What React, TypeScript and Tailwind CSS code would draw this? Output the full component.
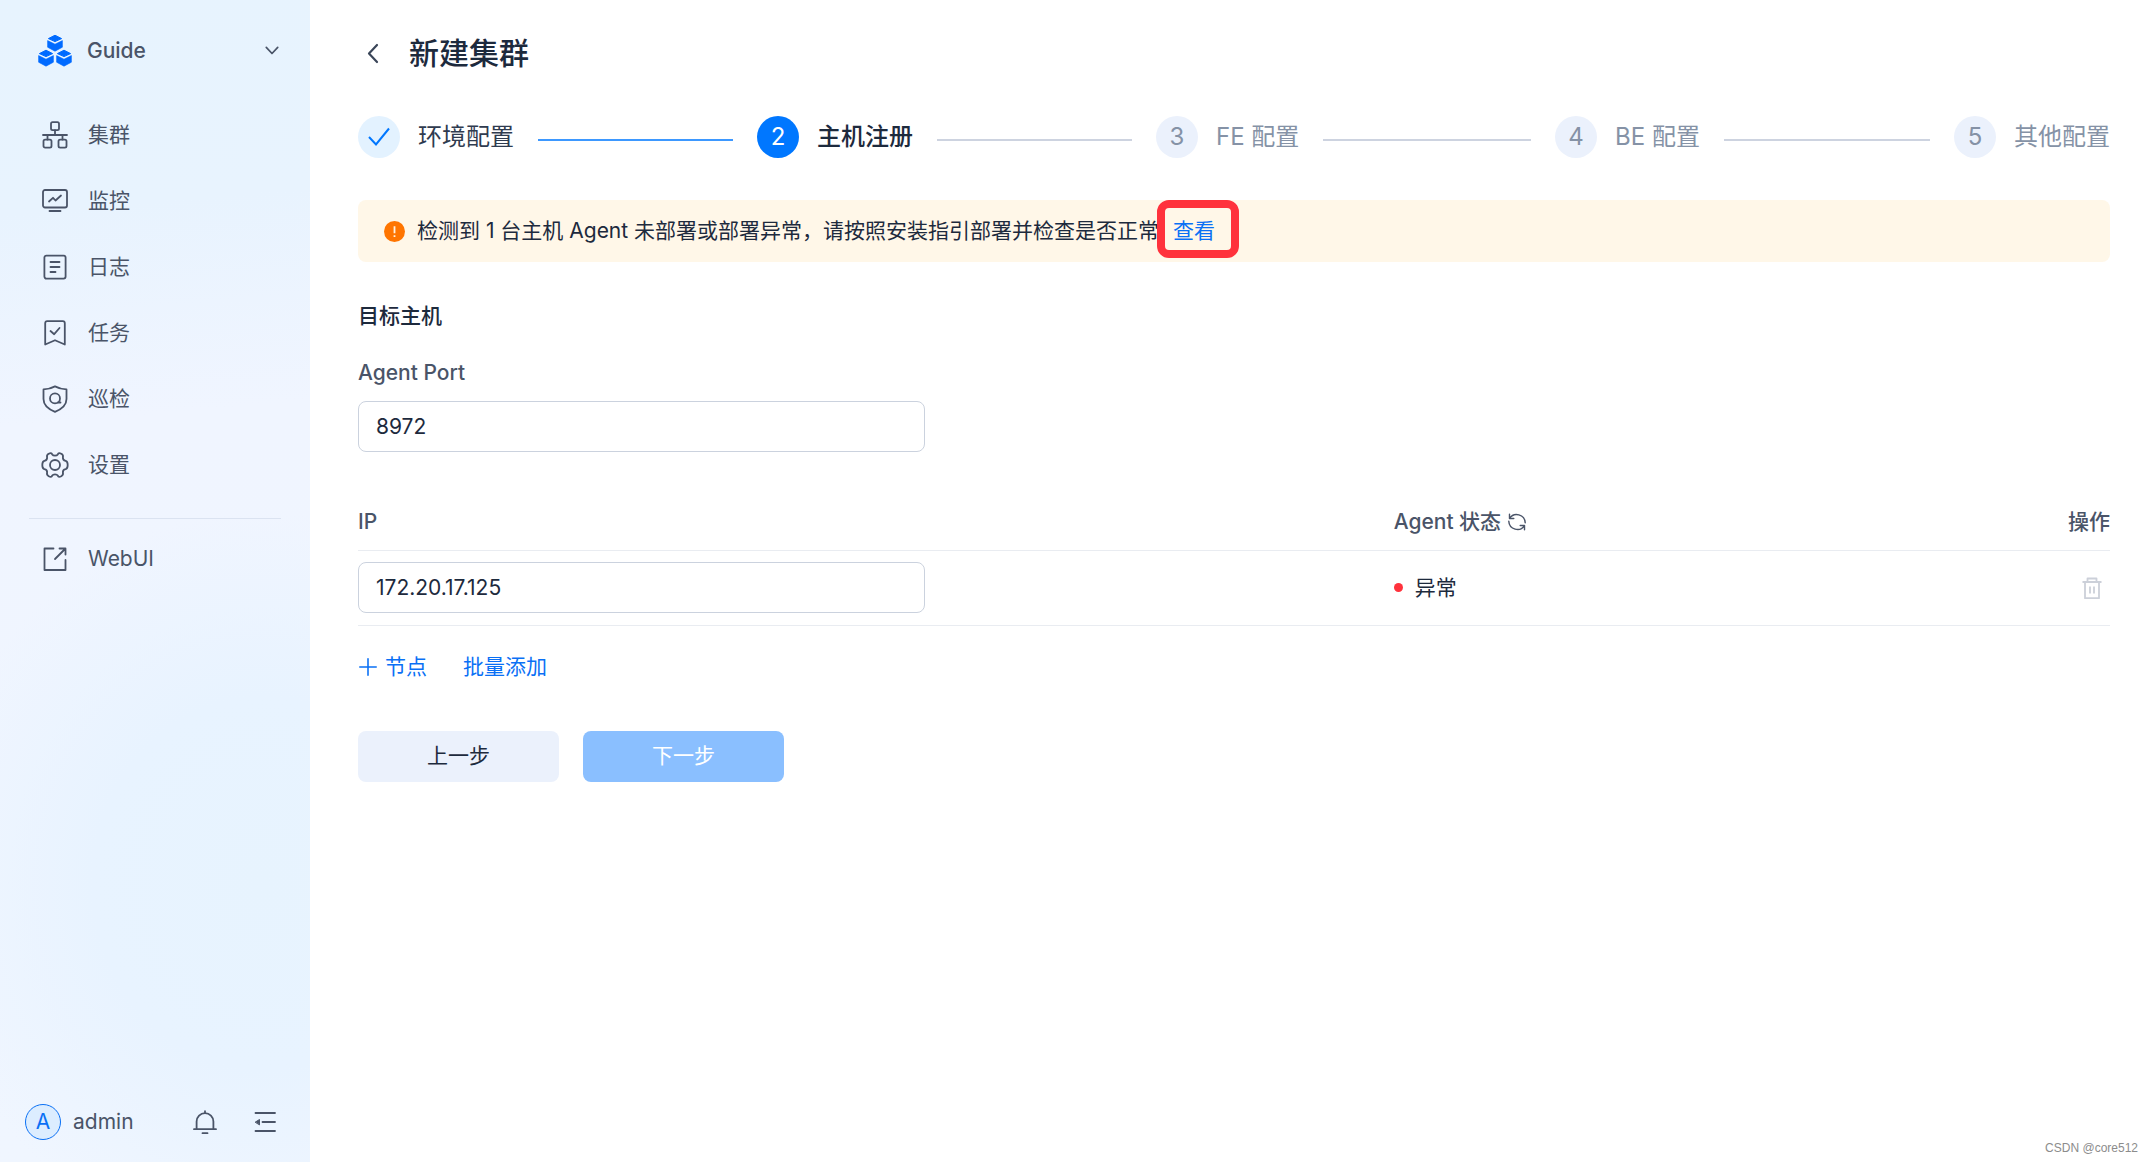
import { ReactNode, useState } from "react";

interface IconProps {
    className?: string;
}

interface NavItem {
    label: string;
    icon: ReactNode;
}

interface Host {
    ip: string;
    status: string;
}

const StrokeIcon = ({ children, className = "size-7" }: IconProps & { children: ReactNode }) => (
    <svg
        className={className}
        viewBox="0 0 28 28"
        fill="none"
        stroke="currentColor"
        strokeWidth="1.8"
        strokeLinecap="round"
        strokeLinejoin="round"
        aria-hidden="true"
    >
        {children}
    </svg>
);

const Logo = () => (
    <svg className="h-8 w-[34px]" viewBox="0 0 34 32" fill="#006aff" aria-hidden="true">
        {[
            [9, 0],
            [0, 15],
            [18, 15],
        ].map(([x, y]) => (
            <g key={`${x}-${y}`} transform={`translate(${x} ${y})`}>
                <path d="M8 0.2 14.6 3.6 8 6.6 1.4 3.6Z" stroke="#006aff" strokeLinejoin="round" />
                <path d="M0.6 5.6 8 9.2 15.4 5.6V12.2L8 16.2 0.6 12.2Z" stroke="#006aff" strokeWidth="0.6" strokeLinejoin="round" />
            </g>
        ))}
    </svg>
);

const navItems: NavItem[] = [
    {
        label: "集群",
        icon: (
            <StrokeIcon>
                <rect x="10" y="1.2" width="8" height="8" rx="1.6" />
                <path d="M14 9.2V14M2 14H26M6.5 14V18.5M21.5 14V18.5" />
                <rect x="2.5" y="18.6" width="8" height="8" rx="1.6" />
                <rect x="17.5" y="18.6" width="8" height="8" rx="1.6" />
            </StrokeIcon>
        ),
    },
    {
        label: "监控",
        icon: (
            <StrokeIcon>
                <rect x="2" y="3" width="24" height="17.5" rx="2" />
                <path d="M8.5 24H19.5M8 14.5 12 10.8 14.5 13.5 20 8.5" />
            </StrokeIcon>
        ),
    },
    {
        label: "日志",
        icon: (
            <StrokeIcon>
                <rect x="3.4" y="2.6" width="21.2" height="23" rx="2" />
                <path d="M9.5 9H18.5M9.5 14H18.5M9.5 19H14.5" />
            </StrokeIcon>
        ),
    },
    {
        label: "任务",
        icon: (
            <StrokeIcon>
                <path d="M4.2 25.5V4.2Q4.2 2.2 6.2 2.2H21.8Q23.8 2.2 23.8 4.2V25.5L14 21.2Z" />
                <path d="M9.5 12 13.2 15.2 18.5 9" />
            </StrokeIcon>
        ),
    },
    {
        label: "巡检",
        icon: (
            <StrokeIcon>
                <path d="M14 1.4C17.5 3.4 21 4.2 25.5 4.4V14C25.5 20.5 21 24 14 26.8 7 24 2.5 20.5 2.5 14V4.4C7 4.2 10.5 3.4 14 1.4Z" />
                <circle cx="14" cy="13.4" r="5" />
                <path d="M17 17.5H19.5" />
            </StrokeIcon>
        ),
    },
    {
        label: "设置",
        icon: (
            <StrokeIcon>
                <path d="M11.2 3.4C12.3 5 15.7 5 16.8 3.4 17.4 1.8 18.6 1.9 20.3 2.8 22 3.7 22.4 4.6 21.9 6.2 21.7 8.2 22.8 9.6 24.6 9.9 26.3 10.3 26.7 11.8 26.7 14 26.7 16.2 26.3 17.7 24.6 18.1 22.8 18.4 21.7 19.8 21.9 21.8 22.4 23.4 22 24.3 20.3 25.2 18.6 26.1 17.4 26.2 16.8 24.6 15.7 23 12.3 23 11.2 24.6 10.6 26.2 9.4 26.1 7.7 25.2 6 24.3 5.6 23.4 6.1 21.8 6.3 19.8 5.2 18.4 3.4 18.1 1.7 17.7 1.3 16.2 1.3 14 1.3 11.8 1.7 10.3 3.4 9.9 5.2 9.6 6.3 8.2 6.1 6.2 5.6 4.6 6 3.7 7.7 2.8 9.4 1.9 10.6 1.8 11.2 3.4Z" />
                <circle cx="14" cy="14" r="5" />
            </StrokeIcon>
        ),
    },
];

const steps = ["环境配置", "主机注册", "FE 配置", "BE 配置", "其他配置"];
const currentStep = 1;

const Sidebar = () => (
    <aside className="flex w-[310px] shrink-0 flex-col bg-[radial-gradient(ellipse_110%_32%_at_85%_76%,#e7f3fe_0%,#e8f3ff_50%,transparent_100%),linear-gradient(175deg,#e7f3fe_0%,#e8f3fe_18%,#f0f5ff_36%,#f0f6ff_100%)] text-[#4a5468]">
        <button type="button" className="mt-6 flex h-[54px] items-center pr-7 pl-[38px] font-medium">
            <Logo />
            <span className="ml-[15px]">Guide</span>
            <StrokeIcon className="ml-auto size-5">
                <path d="M6 9 14 17.5 22 9" strokeWidth="2.4" />
            </StrokeIcon>
        </button>

        <nav className="mt-6 flex flex-col">
            {navItems.map((item) => (
                <a key={item.label} href="#" className="flex h-[66px] items-center gap-[19px] pl-[41px]">
                    {item.icon}
                    {item.label}
                </a>
            ))}
            <hr className="mx-[29px] my-5 border-[#dbe3f1]" />
            <a href="#" className="flex h-10 items-center gap-[19px] pl-[41px]">
                <StrokeIcon>
                    <path d="M12.5 3.5H3.5V25H24.5V15M18.5 3.5H24.5V9.5M24 4 14 14" />
                </StrokeIcon>
                WebUI
            </a>
        </nav>

        <div className="mt-auto mb-[22px] flex items-center pr-[31px] pl-[25px]">
            <span className="flex size-9 items-center justify-center rounded-full border border-[#0a70f5] bg-[#dcedff] text-[#0a70f5]">
                A
            </span>
            <span className="ml-3">admin</span>
            <button type="button" aria-label="通知" className="ml-auto">
                <StrokeIcon>
                    <path d="M5.6 21V13.5A8.4 8.4 0 0 1 22.4 13.5V21M3 21.2H25M14 5V3.2M11.5 25.2H16.5" />
                </StrokeIcon>
            </button>
            <button type="button" aria-label="收起菜单" className="ml-8">
                <StrokeIcon>
                    <path d="M4.5 5H24M11.5 14H24M4.5 23H24" />
                    <path d="M4.5 14 8.5 11.5V16.5Z" fill="currentColor" strokeWidth="1" />
                </StrokeIcon>
            </button>
        </div>
    </aside>
);

const Stepper = () => (
    <ol className="mt-[42px] flex text-2xl">
        {steps.map((step, index) => {
            const done = index < currentStep;
            const active = index === currentStep;
            const last = index === steps.length - 1;

            return (
                <li
                    key={step}
                    className={`flex items-center ${last ? "" : "flex-1"} ${
                        done ? "text-[#2f3b4f]" : active ? "font-medium text-[#1d2a3d]" : "text-[#8592a6]"
                    }`}
                >
                    <span
                        className={`flex size-[42px] shrink-0 items-center justify-center rounded-full font-normal ${
                            done ? "bg-[#e3f2ff] text-[#0077ff]" : active ? "bg-[#0077ff] text-white" : "bg-[#ebf1fc]"
                        }`}
                    >
                        {done ? (
                            <StrokeIcon>
                                <path d="M4 14 11 21.5 24 5.5" strokeLinecap="butt" strokeLinejoin="miter" strokeWidth="2" />
                            </StrokeIcon>
                        ) : (
                            index + 1
                        )}
                    </span>
                    <span className="ml-[18px] shrink-0">{step}</span>
                    {!last && <span className={`mx-6 mt-1.5 h-[2px] flex-1 ${done ? "bg-[#3d98ff]" : "bg-[#cdd3e0]"}`} />}
                </li>
            );
        })}
    </ol>
);

const Notice = () => (
    <div className="mt-[42px] flex h-[62px] items-center rounded-lg bg-[#fff7e8] pl-[26px]">
        <svg className="size-[21px]" viewBox="0 0 21 21" aria-hidden="true">
            <circle cx="10.5" cy="10.5" r="10.5" fill="#ff7500" />
            <path d="M10.5 5.2V12.2M10.5 14.2V16" stroke="#fff3e0" strokeWidth="1.8" />
        </svg>
        <p className="ml-3">检测到 1 台主机 Agent 未部署或部署异常，请按照安装指引部署并检查是否正常</p>
        <a
            href="#"
            className="relative ml-[14px] text-[#0a70f5] after:absolute after:-top-4 after:-right-6 after:-bottom-3 after:-left-4 after:rounded-xl after:border-8 after:border-[#ff323c]"
        >
            查看
        </a>
    </div>
);

const HostTable = () => {
    const [hosts, setHosts] = useState<Host[]>([{ ip: "172.20.17.125", status: "异常" }]);

    const handleIpChange = (index: number, ip: string) => {
        setHosts(hosts.map((host, i) => (i === index ? { ...host, ip } : host)));
    };

    return (
        <table className="mt-[43px] w-full table-fixed text-left">
            <thead className="text-[#4a5468]">
                <tr className="h-[55px] border-b border-[#e9ecf1]">
                    <th className="w-[59%] font-medium">IP</th>
                    <th className="pl-0.5 font-medium">
                        <span className="flex items-center gap-1.5">
                            Agent 状态
                            <button type="button" aria-label="刷新">
                                <StrokeIcon className="size-5">
                                    <path d="M3.5 3V9H9.5M3.5 9A12 12 0 0 1 25.5 15M24.5 25V19H18.5M24.5 19A12 12 0 0 1 2.5 13" strokeWidth="2" />
                                </StrokeIcon>
                            </button>
                        </span>
                    </th>
                    <th className="w-40 text-right font-medium">操作</th>
                </tr>
            </thead>
            <tbody>
                {hosts.map((host, index) => (
                    <tr key={index} className="h-[75px] border-b border-[#e9ecf1]">
                        <td>
                            <input
                                type="text"
                                aria-label="IP"
                                className="block h-[51px] w-[567px] rounded-lg border border-[#cbd2de] bg-white px-[17px]"
                                value={host.ip}
                                onChange={(e) => handleIpChange(index, e.target.value)}
                            />
                        </td>
                        <td className="pl-0.5">
                            <span className="flex items-center gap-3">
                                <span className="size-[9px] rounded-full bg-[#ff323c]" />
                                {host.status}
                            </span>
                        </td>
                        <td>
                            <button type="button" aria-label="删除" className="mr-1 ml-auto block text-[#ccd0d9]">
                                <StrokeIcon>
                                    <path
                                        d="M4.5 8H23.5M9.5 8V4.5H18.5V8M7 8V24.2H21V8M12 12.5V19.5M16 12.5V19.5"
                                        strokeLinecap="butt"
                                    />
                                </StrokeIcon>
                            </button>
                        </td>
                    </tr>
                ))}
            </tbody>
        </table>
    );
};

const App = () => {
    const [port, setPort] = useState("8972");

    return (
        <div className="relative flex min-h-screen bg-white font-['Inter','Noto_Sans_CJK_SC',sans-serif] text-[21px] leading-[30px] text-[#1d2a3d]">
            <Sidebar />

            <main className="min-w-0 flex-1 pt-8 pr-11 pb-8 pl-12">
                <header className="flex h-[42px] items-center">
                    <button type="button" aria-label="返回" className="text-[#3a4558]">
                        <StrokeIcon>
                            <path d="M19 6 11 14.5 19 23" strokeWidth="2.2" />
                        </StrokeIcon>
                    </button>
                    <h1 className="ml-[23px] text-3xl font-medium">新建集群</h1>
                </header>

                <Stepper />
                <Notice />

                <h2 className="mt-[39px] font-medium">目标主机</h2>
                <label htmlFor="agent-port" className="mt-[27px] block font-medium text-[#4a5468]">
                    Agent Port
                </label>
                <input
                    id="agent-port"
                    type="text"
                    className="mt-[13px] block h-[51px] w-[567px] rounded-lg border border-[#cbd2de] bg-white px-[17px]"
                    value={port}
                    onChange={(e) => setPort(e.target.value)}
                />

                <HostTable />

                <div className="mt-[26px] flex items-center text-[#0a70f5]">
                    <button type="button" className="flex items-center gap-[7px]">
                        <StrokeIcon className="size-5">
                            <path d="M14 2.5V25.5M2.5 14H25.5" strokeWidth="2.2" />
                        </StrokeIcon>
                        节点
                    </button>
                    <button type="button" className="ml-9">
                        批量添加
                    </button>
                </div>

                <div className="mt-[49px] flex gap-6">
                    <button type="button" className="h-[51px] w-[201px] rounded-lg bg-[#ebf1fc]">
                        上一步
                    </button>
                    <button type="button" className="h-[51px] w-[201px] rounded-lg bg-[#8abfff] text-white">
                        下一步
                    </button>
                </div>
            </main>

            <span className="absolute right-4 bottom-1 font-['Liberation_Sans',sans-serif] text-xs leading-5 text-[#8c8c8c]">
                CSDN @core512
            </span>
        </div>
    );
};

export default App;
